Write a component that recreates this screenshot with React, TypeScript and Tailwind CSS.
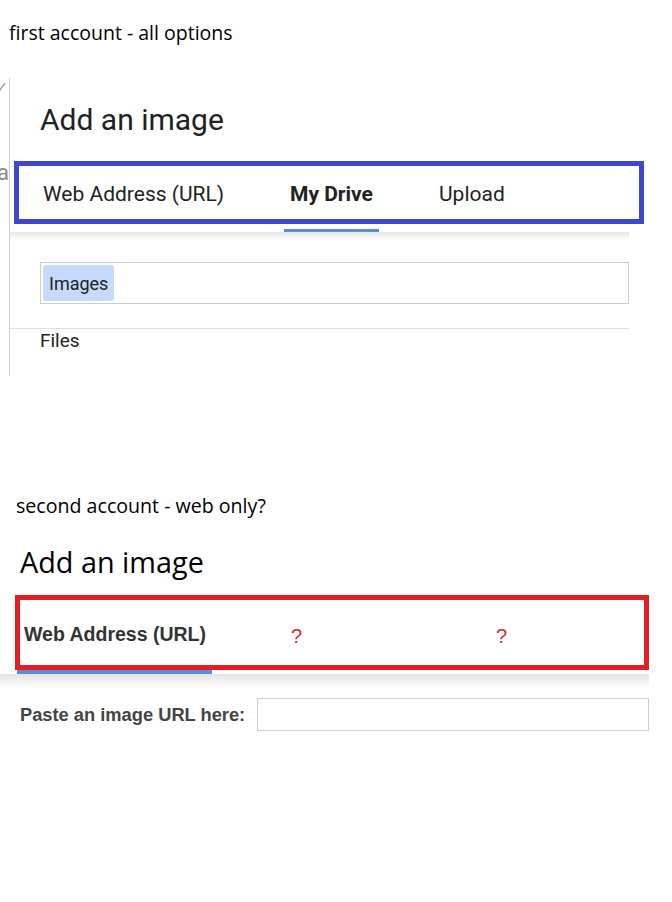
export default function App() {
  const roboto = { fontFamily: "Roboto, 'Liberation Sans', sans-serif" };
  return (
    <div className="relative w-[672px] h-[902px] bg-white overflow-hidden">
      {/* Section 1 label */}
      <div className="h-[78px] pl-[9px] pt-[19px] text-[19.5px] leading-[28px] text-black font-['Open_Sans',sans-serif]">
        first account - all options
      </div>

      {/* Section 1 dialog */}
      <div className="relative flex h-[298px] w-[629px]" style={roboto}>
        <div className="relative w-[10px] border-r border-[#cfcfcf] overflow-hidden">
          <span className="absolute left-[-5px] top-[0px] text-[16px] leading-[20px] text-[#9a9a9a]">✓</span>
          <span className="absolute left-[-3px] top-[82px] text-[22px] leading-[26px] text-[#8a8a8a]">a</span>
        </div>
        <div className="flex-1 flex flex-col">
          <div className="h-[83px] pl-[30px] pt-[24px] text-[30px] leading-[36px] text-[#202124]">Add an image</div>
          <div className="flex h-[71px] text-[21px] text-[#222]">
            <div className="w-[274px] flex flex-col">
              <div className="flex-1 flex items-center pl-[33px] pb-[1px]">Web Address (URL)</div>
              <div className="h-[3px]" />
            </div>
            <div className="w-[95px] flex flex-col">
              <div className="flex-1 flex items-center justify-center font-bold pb-[1px]">My Drive</div>
              <div className="h-[3px] bg-[#5b8ddb]" />
            </div>
            <div className="flex-1 flex flex-col">
              <div className="flex-1 flex items-center pl-[60px] pb-[1px]">Upload</div>
              <div className="h-[3px]" />
            </div>
          </div>
          <div className="h-[8px] bg-gradient-to-b from-[#e6e6e6] to-white" />
          <div className="mt-[22px] ml-[30px] h-[42px] border border-[#cccccc] p-[2px] flex">
            <div className="h-full px-[6px] flex items-center bg-[#c6dafc] rounded-[3px] text-[18px] text-[#222]">Images</div>
          </div>
          <div className="mt-[24px] border-t border-[#e0e0e0]" />
          <div className="ml-[30px] text-[19px] leading-[24px] text-[#222]">Files</div>
        </div>
      </div>

      {/* Section 2 */}
      <div className="w-[649px] flex flex-col">
        <div className="pt-[116px] pl-[16px] text-[19.6px] leading-[28px] text-black font-['Open_Sans',sans-serif]">
          second account - web only?
        </div>
        <div className="mt-[24px] pl-[20px] text-[28.8px] leading-[36px] text-black font-['Open_Sans',sans-serif]">
          Add an image
        </div>
        <div className="mt-[19px] flex h-[75px] font-['Liberation_Sans',Arial,sans-serif]">
          <div className="ml-[17px] w-[195px] flex flex-col">
            <div className="flex-1 flex items-center pl-[7px] text-[19.5px] font-bold text-[#333]">Web Address (URL)</div>
            <div className="h-[4px] bg-[#5b8ddb]" />
          </div>
        </div>
        <div className="h-[15px] bg-gradient-to-b from-[#e4e4e4] to-white" />
        <div className="mt-[9px] flex items-center h-[33px] font-['Liberation_Sans',Arial,sans-serif]">
          <div className="pl-[20px] w-[257px] text-[18.3px] font-bold text-[#444] whitespace-nowrap">Paste an image URL here:</div>
          <div className="flex-1 h-[33px] border border-[#cccccc]" />
        </div>
      </div>

      {/* Annotation boxes */}
      <div className="absolute left-[14px] top-[161px] w-[630px] h-[63px] border-[5px] border-[#3f48cc]" />
      <div className="absolute left-[15px] top-[595px] w-[634px] h-[75px] border-[5px] border-[#e21f26]" />
      <span className="absolute left-[291px] top-[623px] text-[20px] leading-[26px] text-[#d42a2a] font-['Liberation_Sans',Arial,sans-serif]">?</span>
      <span className="absolute left-[496px] top-[623px] text-[20px] leading-[26px] text-[#d42a2a] font-['Liberation_Sans',Arial,sans-serif]">?</span>
    </div>
  );
}
